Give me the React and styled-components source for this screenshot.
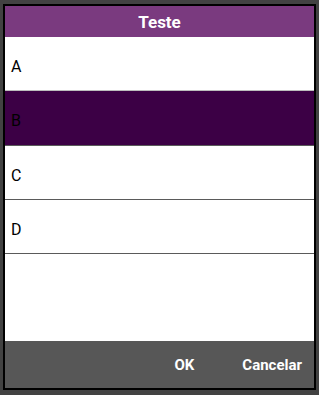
import React from "react";
import styled, { createGlobalStyle } from "styled-components";

const GlobalStyle = createGlobalStyle`
  html, body {
    margin: 0;
    padding: 0;
    background: #424242;
    font-family: Roboto, "Liberation Sans", sans-serif;
  }
`;

const Screen = styled.div`
  width: 319px;
  height: 395px;
  box-sizing: border-box;
  padding: 4px 3px 5px 3px;
  display: flex;
`;

const Dialog = styled.div`
  flex: 1;
  display: flex;
  flex-direction: column;
  border: 2px solid #000;
  background: #fff;
`;

const Header = styled.div`
  height: 31px;
  background: #7a3a7f;
  color: #fff;
  font-weight: 700;
  font-size: 17px;
  display: flex;
  align-items: center;
  justify-content: center;
`;

const List = styled.div`
  flex: 1;
  display: flex;
  flex-direction: column;
`;

const Row = styled.div`
  height: 53.3px;
  box-sizing: border-box;
  border-bottom: 1px solid ${(p) => (p.$first ? "#bdbdbd" : "#5a5a5a")};
  background: ${(p) => (p.$selected ? "#3c0045" : "#fff")};
  color: #000;
  font-size: 16px;
  display: flex;
  align-items: center;
  padding: 6px 0 0 6px;
  flex: none;
  height: 54.3px;
`;

const Footer = styled.div`
  height: 47px;
  background: #575757;
  display: flex;
  align-items: center;
  justify-content: flex-end;
  padding-right: 12px;
  gap: 48px;
`;

const Button = styled.button`
  background: none;
  border: none;
  padding: 0;
  color: #fff;
  font-family: Roboto, "Liberation Sans", sans-serif;
  font-weight: 700;
  font-size: 15px;
  cursor: pointer;
`;

const items = ["A", "B", "C", "D"];

export default function App() {
  return (
    <>
      <GlobalStyle />
      <Screen>
        <Dialog>
          <Header>Teste</Header>
          <List>
            {items.map((item, i) => (
              <Row key={item} $first={i === 0} $selected={item === "B"}>
                {item}
              </Row>
            ))}
          </List>
          <Footer>
            <Button>OK</Button>
            <Button>Cancelar</Button>
          </Footer>
        </Dialog>
      </Screen>
    </>
  );
}
